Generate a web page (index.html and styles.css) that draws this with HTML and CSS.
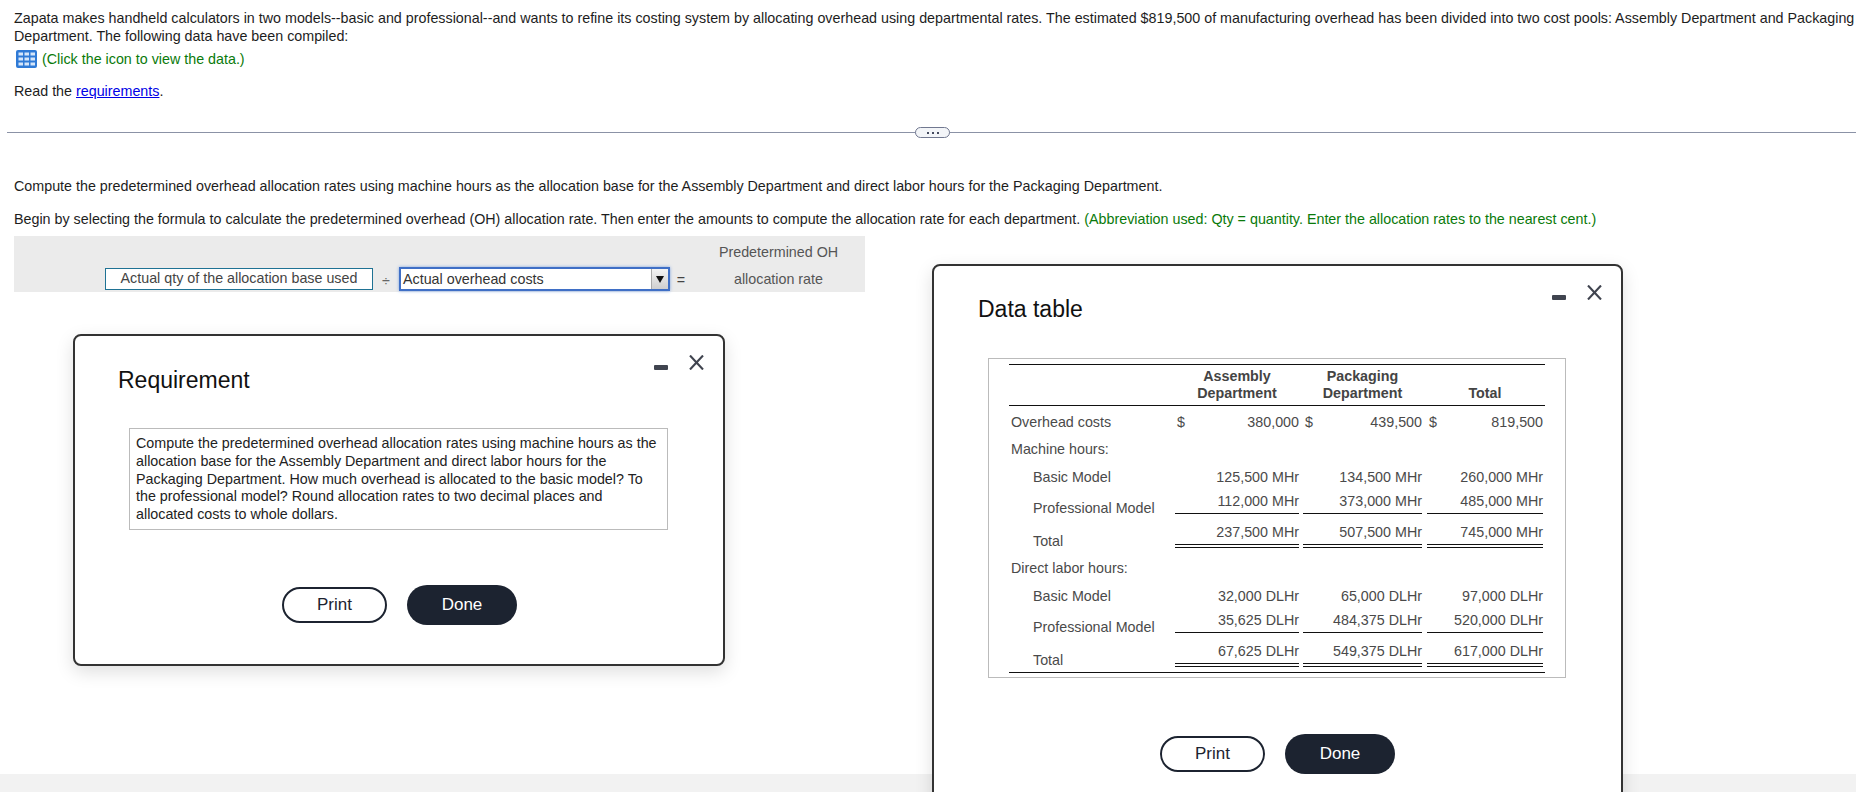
FILE: index.html
```html
<!DOCTYPE html>
<html lang="en">
<head>
<meta charset="utf-8">
<title>Departmental overhead rates</title>
<link rel="stylesheet" href="styles.css">
</head>
<body>
<div class="page">
  <section class="intro">
    <p class="problem">Zapata makes handheld calculators in two models--basic and professional--and wants to refine its costing system by allocating overhead using departmental rates. The estimated $819,500 of manufacturing overhead has been divided into two cost pools: Assembly Department and Packaging Department. The following data have been compiled:</p>
    <p class="data-link">
      <svg class="grid-icon" viewBox="0 0 21 18" aria-hidden="true">
        <rect width="21" height="18" rx="2" fill="#2f7ad6"/>
        <g fill="#d6e6f9">
          <rect x="2.5" y="2.5" width="4.5" height="3"/><rect x="8.5" y="2.5" width="4.5" height="3"/><rect x="14.5" y="2.5" width="4.5" height="3"/>
          <rect x="2.5" y="7.5" width="4.5" height="3"/><rect x="8.5" y="7.5" width="4.5" height="3"/><rect x="14.5" y="7.5" width="4.5" height="3"/>
          <rect x="2.5" y="12.5" width="4.5" height="3"/><rect x="8.5" y="12.5" width="4.5" height="3"/><rect x="14.5" y="12.5" width="4.5" height="3"/>
        </g>
      </svg>
      <span class="note">(Click the icon to view the data.)</span>
    </p>
    <p class="read">Read the <a class="link" href="#">requirements</a>.</p>
  </section>

  <div class="divider"><span class="pill"><i></i><i></i><i></i></span></div>

  <section class="task">
    <p class="task-a">Compute the predetermined overhead allocation rates using machine hours as the allocation base for the Assembly Department and direct labor hours for the Packaging Department.</p>
    <p class="task-b">Begin by selecting the formula to calculate the predetermined overhead (OH) allocation rate. Then enter the amounts to compute the allocation rate for each department. <span class="note">(Abbreviation used: Qty = quantity. Enter the allocation rates to the nearest cent.)</span></p>
  </section>

  <section class="formula">
    <div class="given">Actual qty of the allocation base used</div>
    <span class="op-div">÷</span>
    <div class="select"><span class="select-text">Actual overhead costs</span><span class="select-btn"><svg viewBox="0 0 8 8" class="caret" aria-hidden="true"><path d="M0 1h8L4 8z"/></svg></span></div>
    <span class="op-eq">=</span>
    <div class="result"><span>Predetermined OH</span><span>allocation rate</span></div>
  </section>

  <div class="spacer"></div>
  <div class="strip"></div>

  <article class="window req-window">
    <div class="win-controls"><span class="win-min"></span><svg class="win-x" viewBox="0 0 15 15" aria-hidden="true"><path d="M1 0.5L14 14.5M14 0.5L1 14.5"/></svg></div>
    <h2 class="win-title">Requirement</h2>
    <div class="req-box">Compute the predetermined overhead allocation rates using machine hours as the allocation base for the Assembly Department and direct labor hours for the Packaging Department. How much overhead is allocated to the basic model? To the professional model? Round allocation rates to two decimal places and allocated costs to whole dollars.</div>
    <div class="win-actions"><button class="btn btn-print">Print</button><button class="btn btn-done">Done</button></div>
  </article>

  <article class="window data-window">
    <div class="win-controls"><span class="win-min"></span><svg class="win-x" viewBox="0 0 15 15" aria-hidden="true"><path d="M1 0.5L14 14.5M14 0.5L1 14.5"/></svg></div>
    <h2 class="win-title">Data table</h2>
    <div class="table-box">
      <div class="table-rules">
        <table class="data">
          <colgroup><col class="c-label"><col class="c-one"><col class="c-two"><col class="c-three"></colgroup>
          <thead>
            <tr><th></th><th class="h1"><div>Assembly<br>Department</div></th><th class="h2"><div>Packaging<br>Department</div></th><th class="h3"><div>Total</div></th></tr>
          </thead>
          <tbody>
            <tr class="r-first"><td class="lab">Overhead costs</td><td class="v g1"><div class="n"><span>$</span><span>380,000</span></div></td><td class="v g2"><div class="n"><span>$</span><span>439,500</span></div></td><td class="v g3"><div class="n"><span>$</span><span>819,500</span></div></td></tr>
            <tr class="r-plain"><td class="lab">Machine hours:</td><td></td><td></td><td></td></tr>
            <tr class="r-plain"><td class="lab ind">Basic Model</td><td class="v g1"><div class="n end">125,500 MHr</div></td><td class="v g2"><div class="n end">134,500 MHr</div></td><td class="v g3"><div class="n end">260,000 MHr</div></td></tr>
            <tr class="r-pro"><td class="lab ind">Professional Model</td><td class="v g1"><div class="n end under">112,000 MHr</div></td><td class="v g2"><div class="n end under">373,000 MHr</div></td><td class="v g3"><div class="n end under">485,000 MHr</div></td></tr>
            <tr class="r-total"><td class="lab ind">Total</td><td class="v g1"><div class="n end dbl">237,500 MHr</div></td><td class="v g2"><div class="n end dbl">507,500 MHr</div></td><td class="v g3"><div class="n end dbl">745,000 MHr</div></td></tr>
            <tr class="r-section"><td class="lab">Direct labor hours:</td><td></td><td></td><td></td></tr>
            <tr class="r-plain"><td class="lab ind">Basic Model</td><td class="v g1"><div class="n end">32,000 DLHr</div></td><td class="v g2"><div class="n end">65,000 DLHr</div></td><td class="v g3"><div class="n end">97,000 DLHr</div></td></tr>
            <tr class="r-pro"><td class="lab ind">Professional Model</td><td class="v g1"><div class="n end under">35,625 DLHr</div></td><td class="v g2"><div class="n end under">484,375 DLHr</div></td><td class="v g3"><div class="n end under">520,000 DLHr</div></td></tr>
            <tr class="r-total"><td class="lab ind">Total</td><td class="v g1"><div class="n end dbl">67,625 DLHr</div></td><td class="v g2"><div class="n end dbl">549,375 DLHr</div></td><td class="v g3"><div class="n end dbl">617,000 DLHr</div></td></tr>
          </tbody>
        </table>
      </div>
    </div>
    <div class="win-actions"><button class="btn btn-print">Print</button><button class="btn btn-done">Done</button></div>
  </article>
</div>
</body>
</html>
```
FILE: styles.css
```css
* { box-sizing: border-box; }
html, body { margin: 0; height: 792px; overflow: hidden; background: #fff; }
body { font-family: "Liberation Sans", Arial, sans-serif; font-size: 14.3px; color: #1d1d1d; }
p { margin: 0; }
.page { position: relative; width: 1856px; height: 792px; overflow: hidden; display: flex; flex-direction: column; }

.intro { padding: 9px 0 0 14px; line-height: 18px; }
.data-link { display: flex; align-items: center; gap: 5px; margin-top: 4px; height: 20px; }
.grid-icon { width: 21px; height: 18px; margin-left: 2px; }
.note { color: #0a7a0a; }
.read { margin-top: 13px; }
.link { color: #0000e6; }

.divider { position: relative; height: 1px; margin: 32px 0 0 7px; background: #8b92a6; }
.pill { position: absolute; left: 908px; top: -5px; width: 35px; height: 11px; border: 1.5px solid #717890; border-radius: 6px; background: #f3f5f8; display: flex; justify-content: center; align-items: center; gap: 3px; }
.pill i { width: 2px; height: 2px; background: #444b60; }

.task { padding: 44px 0 0 14px; line-height: 18px; }
.task-b { margin-top: 15px; }

.formula { position: relative; display: flex; align-items: flex-end; height: 56px; margin: 8px 0 0 14px; width: 851px; background: #ebebeb; color: #444; padding: 0 0 2px 91px; }
.given { width: 268px; height: 22px; border: 1px solid #1f7294; background: #fff; text-align: center; line-height: 19px; }
.op-div { width: 26px; text-align: center; line-height: 18px; color: #666; }
.select { width: 271px; height: 24px; margin-bottom: -1px; display: flex; border: 2px solid #3f6fc6; background: #fff; box-shadow: 0 0 3px #7fa3e0; }
.select-text { flex: 1; padding-left: 2px; line-height: 20px; color: #333; }
.select-btn { width: 17px; display: flex; align-items: center; justify-content: center; background: linear-gradient(#f4f4f4, #cfcfcf); border-left: 1px solid #aaa; }
.caret { width: 8px; height: 8px; fill: #111; }
.op-eq { width: 22px; text-align: center; line-height: 20px; }
.result { flex: 1; display: flex; flex-direction: column; align-items: center; gap: 9px; line-height: 18px; padding-bottom: 2px; color: #555; }

.spacer { flex: 1; }
.strip { height: 18px; background: #f2f2f2; }

.window { position: absolute; background: #fff; border: 2px solid #333; border-radius: 8px; box-shadow: 0 6px 18px rgba(0,0,0,.13); }
.req-window { left: 73px; top: 334px; width: 652px; height: 332px; }
.data-window { left: 932px; top: 264px; width: 691px; height: 560px; }
.win-controls { position: absolute; right: 19px; top: 19px; display: flex; align-items: center; gap: 21px; }
.win-min { width: 14px; height: 5px; background: #40444f; border-radius: 1px; margin-top: 10px; }
.win-x { width: 15px; height: 15px; fill: none; stroke: #40444f; stroke-width: 2.1; }
.win-title { margin: 0; font-weight: 400; font-size: 23px; line-height: 28px; color: #111; }
.req-window .win-title { padding: 30px 0 0 43px; }
.data-window .win-title { padding: 29px 0 0 44px; }

.req-box { margin: 34px 0 0 54px; width: 539px; height: 102px; border: 1px solid #bbb; padding: 6px 6px 4px; line-height: 17.8px; color: #222; }
.win-actions { position: absolute; display: flex; align-items: center; gap: 20px; }
.req-window .win-actions { left: 207px; top: 249px; }
.data-window .win-actions { left: 226px; top: 468px; }
.btn { font: 400 17px "Liberation Sans", Arial, sans-serif; padding: 0; border-radius: 18px; }
.btn-print { width: 105px; height: 36px; background: #fff; color: #1c2330; border: 2px solid #1c2330; }
.btn-done { width: 110px; height: 40px; background: #1c2330; color: #fff; border: 0; border-radius: 20px; }

.table-box { margin: 35px 0 0 54px; width: 578px; height: 320px; border: 1px solid #bbb; padding: 5px 20px; }
.table-rules { border-top: 1px solid #111; border-bottom: 1px solid #111; height: 309px; }
.data { border-collapse: separate; border-spacing: 0; table-layout: fixed; width: 536px; color: #4a4a4a; font-size: 14.3px; line-height: 16px; }
.c-label { width: 166px; }
.c-one { width: 128px; }
.c-two { width: 124px; }
.c-three { width: 118px; }
.data th { padding: 0; font-weight: 700; border-bottom: 1px solid #111; vertical-align: bottom; color: #444; line-height: 17px; }
.data th div { padding: 3px 0 3px; text-align: center; }
.h1 div { margin-right: 4px; }
.h2 div { margin-right: 5px; }
.h3 div { margin-right: 2px; }
.data td { padding: 0; vertical-align: top; }
.lab { padding-left: 2px !important; white-space: nowrap; }
.data td.ind { padding-left: 24px !important; }
.g1 .n { margin-right: 4px; }
.g2 .n { margin-right: 5px; }
.g3 .n { margin-right: 2px; }
.n { display: flex; justify-content: space-between; white-space: nowrap; }
.n span:first-child { margin-left: 2px; }
.end { justify-content: flex-end; }
.under { border-bottom: 1px solid #111; padding-bottom: 4px; }
.dbl { border-bottom: 4px double #111; padding-bottom: 4px; }

.r-first td { height: 29px; padding-top: 8px; }
.r-plain td { height: 28px; padding-top: 6px; }
.r-pro td { height: 23px; padding-top: 2px; }
.r-pro .lab { padding-top: 9px; }
.r-total td { height: 33px; padding-top: 8px; }
.r-total .lab { padding-top: 17px; }
.r-section td { height: 33px; padding-top: 11px; }
```
